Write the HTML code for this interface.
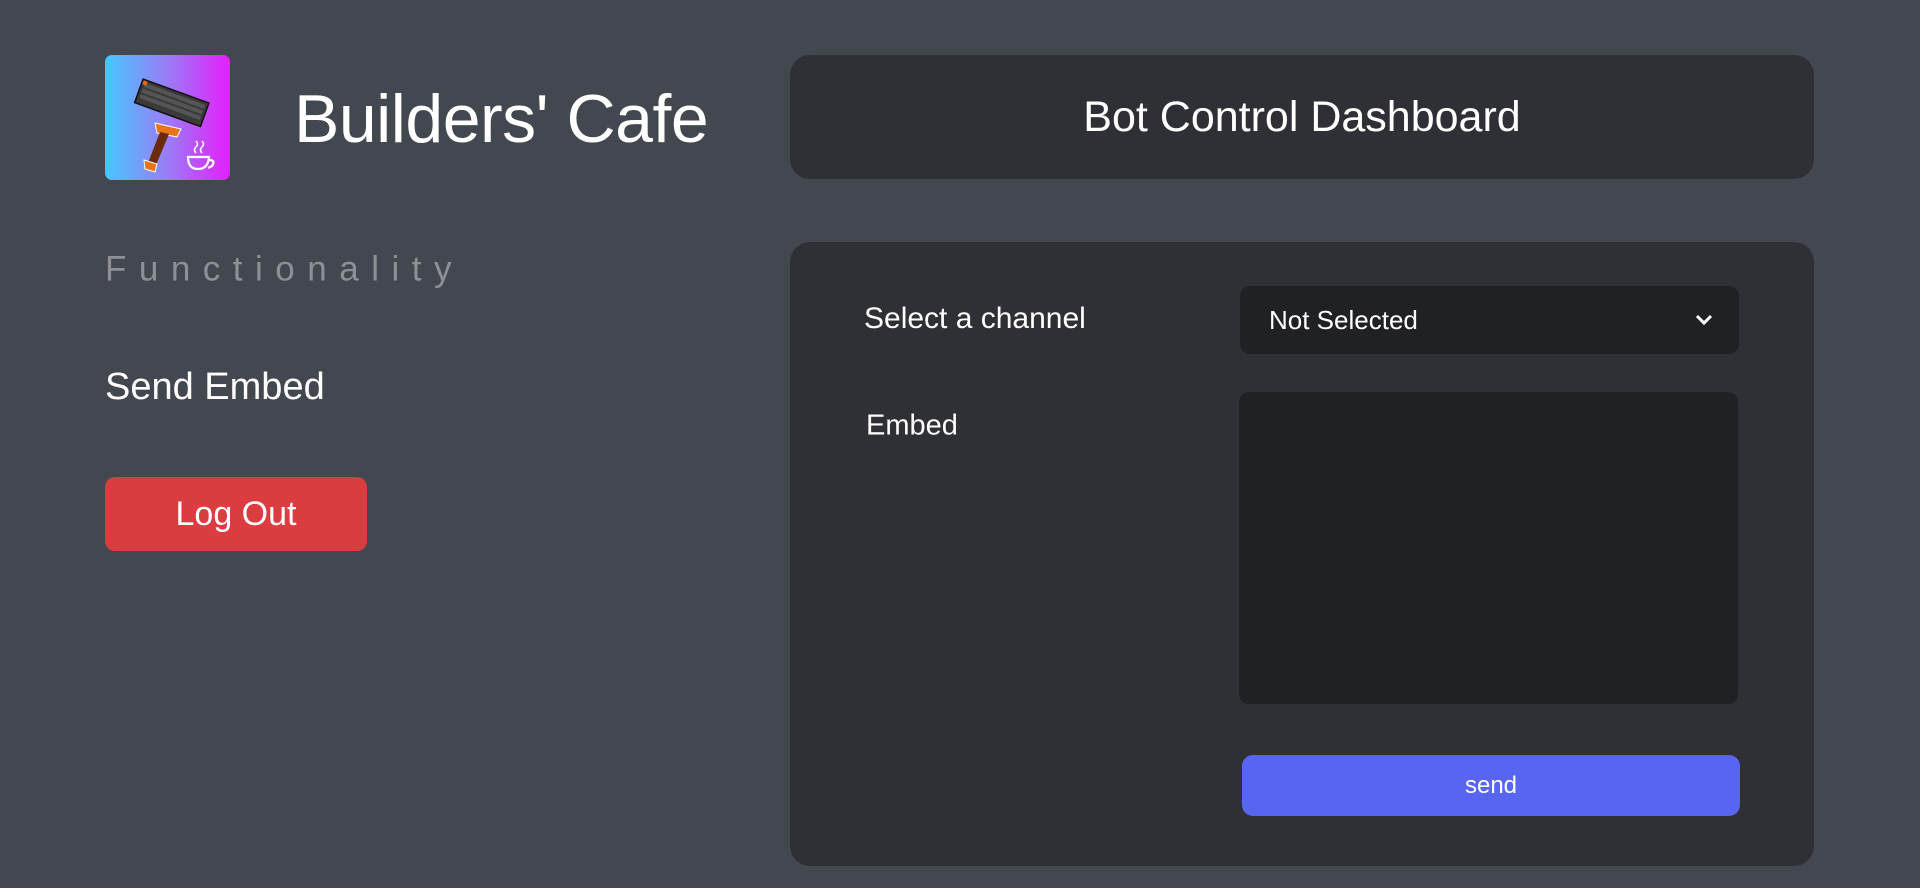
<!DOCTYPE html>
<html><head><meta charset="utf-8"><style>
*{margin:0;padding:0;box-sizing:border-box}
body{width:1920px;height:888px;background:#43474f;font-family:"Liberation Sans",sans-serif;color:#fff;position:relative;overflow:hidden}
.a{position:absolute}
.card{background:#2f3035;border-radius:20px}
.lbl{font-size:29px;line-height:1;transform:translateY(-50%)}
</style></head><body>
<div class="a" style="left:105px;top:55px;width:125px;height:125px;border-radius:7px;background:linear-gradient(90deg,#45c8fe,#9a7cf6 50%,#e41ffc)">
<svg width="125" height="125" viewBox="0 0 125 125">
<polygon points="50,68 76,74 72,82 52,78" fill="#e8741a" stroke="#fff" stroke-width="1"/>
<polygon points="55,77 64,79 51,110 43,108" fill="#6b2a08"/>
<polygon points="39,105 52,109 50,117 40,114" fill="#e8741a" stroke="#fff" stroke-width="1"/>
<g transform="rotate(20 66 47)"><rect x="32" y="35" width="70" height="25" fill="#3a3a3a" stroke="#111" stroke-width="1.5"/>
<g fill="#555"><rect x="35" y="38" width="64" height="4"/><rect x="35" y="44" width="64" height="4"/><rect x="35" y="50" width="64" height="4"/></g>
<rect x="33" y="36" width="4" height="4" fill="#e86a10"/></g>
<path d="M83 102 q0 12 10 12 q10 0 11-12 z M104 105 q7 0 3 6 l-4 2" fill="none" stroke="#fff" stroke-width="2.2"/>
<path d="M91 98 q-3-3 0-6 q3-3 0-6 M97 98 q-3-3 0-6 q3-3 0-6" fill="none" stroke="#fff" stroke-width="1.5"/>
</svg></div>
<div class="a" style="left:294px;top:119px;font-size:68px;transform:translateY(-50%);line-height:1;letter-spacing:-0.5px">Builders' Cafe</div>
<div class="a" style="left:105px;top:269px;font-size:35px;color:#8e9096;letter-spacing:12.5px;transform:translateY(-50%);line-height:1">Functionality</div>
<div class="a" style="left:105px;top:387px;font-size:38px;transform:translateY(-50%);line-height:1">Send Embed</div>
<div class="a" style="left:105px;top:477px;width:262px;height:74px;border-radius:10px;background:#db3c40;font-size:34px;display:flex;align-items:center;justify-content:center">Log Out</div>
<div class="a card" style="left:790px;top:55px;width:1024px;height:124px;display:flex;align-items:center;justify-content:center;font-size:43px">Bot Control Dashboard</div>
<div class="a card" style="left:790px;top:242px;width:1024px;height:624px"></div>
<div class="a lbl" style="left:864px;top:319px;font-size:30px">Select a channel</div>
<div class="a lbl" style="left:866px;top:426px">Embed</div>
<div class="a" style="left:1240px;top:286px;width:499px;height:68px;background:#202124;border-radius:10px">
<div class="a" style="left:29px;top:34px;font-size:26px;transform:translateY(-50%);line-height:1">Not Selected</div>
<svg class="a" style="left:455px;top:27px" width="18" height="14" viewBox="0 0 18 14"><path d="M2 3 l7 7 l7-7" fill="none" stroke="#fff" stroke-width="3"/></svg>
</div>
<div class="a" style="left:1239px;top:392px;width:499px;height:312px;background:#202124;border-radius:10px"></div>
<div class="a" style="left:1242px;top:755px;width:498px;height:61px;background:#5865f2;border-radius:11px;display:flex;align-items:center;justify-content:center;font-size:24px">send</div>
</body></html>
